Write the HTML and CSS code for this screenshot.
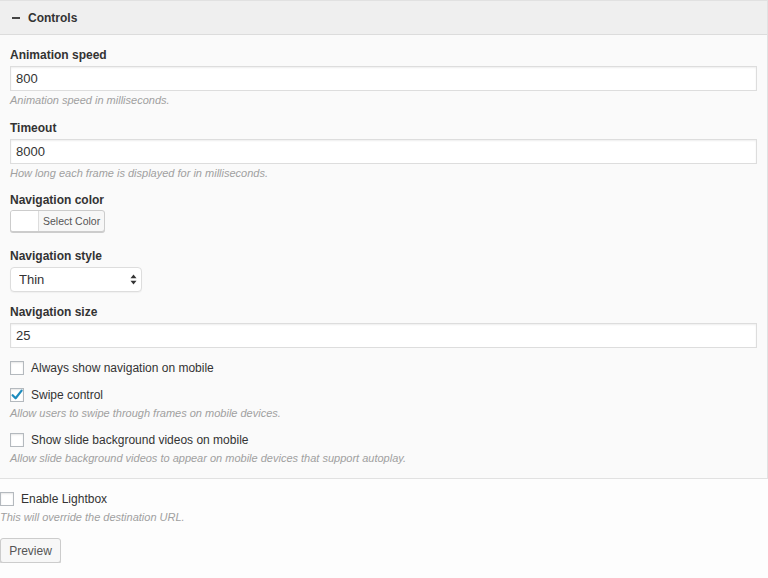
FILE: index.html
```html
<!DOCTYPE html>
<html lang="en">
<head>
<meta charset="UTF-8">
<meta name="viewport" content="width=device-width, initial-scale=1.0">
<title>Slide Controls</title>
<link rel="stylesheet" href="styles.css">
</head>
<body>

<div class="panel">
    <div class="panel-header"><span class="toggle"></span>Controls</div>
    <div class="panel-body">

        <div class="field">
            <label class="field-label" for="animSpeed">Animation speed</label>
            <input type="text" class="text-input" id="animSpeed" value="800">
            <p class="help">Animation speed in milliseconds.</p>
        </div>

        <div class="field">
            <label class="field-label" for="timeout">Timeout</label>
            <input type="text" class="text-input" id="timeout" value="8000">
            <p class="help">How long each frame is displayed for in milliseconds.</p>
        </div>

        <div class="field field-color">
            <label class="field-label">Navigation color</label>
            <button type="button" class="color-button"><span class="swatch"></span><span class="color-text">Select Color</span></button>
        </div>

        <div class="field field-select">
            <label class="field-label" for="navStyle">Navigation style</label>
            <div class="select-wrap">
                <select id="navStyle" class="select">
                    <option>Thin</option>
                    <option>Thick</option>
                </select>
                <svg class="select-arrows" width="7" height="11" viewBox="0 0 7 11">
                    <path d="M3.5 0.5 L6.5 4.2 L0.5 4.2 Z" fill="#333"/>
                    <path d="M3.5 10.5 L6.5 6.8 L0.5 6.8 Z" fill="#333"/>
                </svg>
            </div>
        </div>

        <div class="field">
            <label class="field-label" for="navSize">Navigation size</label>
            <input type="text" class="text-input" id="navSize" value="25">
        </div>

        <div class="check-row first">
            <span class="checkbox"></span>
            <span class="check-label">Always show navigation on mobile</span>
        </div>

        <div class="check-row">
            <span class="checkbox">
                <svg width="14" height="14" viewBox="0 0 14 14">
                    <path d="M2.6 7.2 L5.6 10.3 L11.6 2.6" fill="none" stroke="#1e8cbe" stroke-width="2.2" stroke-linecap="round" stroke-linejoin="round"/>
                </svg>
            </span>
            <span class="check-label">Swipe control</span>
        </div>
        <p class="help check-help">Allow users to swipe through frames on mobile devices.</p>

        <div class="check-row">
            <span class="checkbox"></span>
            <span class="check-label">Show slide background videos on mobile</span>
        </div>
        <p class="help check-help">Allow slide background videos to appear on mobile devices that support autoplay.</p>

    </div>
</div>

<div class="after-panel">
    <div class="check-row">
        <span class="checkbox"></span>
        <span class="check-label">Enable Lightbox</span>
    </div>
    <p class="help check-help">This will override the destination URL.</p>

    <button type="button" class="button">Preview</button>
</div>

</body>
</html>
```

FILE: styles.css
```css
body {
    font-family: "Liberation Sans", Arial, sans-serif;
    margin: 0;
    background-color: #fdfdfd;
    color: #333;
}
.panel {
    border: 1px solid #e1e1e1;
    border-left: none;
    background-color: #fafafa;
}
.panel-header {
    height: 34px;
    background-color: #efefef;
    border-bottom: 1px solid #dcdcdc;
    font-size: 12px;
    font-weight: bold;
    color: #333;
    padding: 1px 0 0 12px;
    box-sizing: border-box;
    display: flex;
    align-items: center;
}
.toggle {
    width: 8px;
    height: 2px;
    background-color: #444;
    margin-right: 8px;
}
.panel-body {
    padding: 12px 10px 13px 10px;
}
.field {
    margin-bottom: 13px;
}
.field-label {
    display: block;
    font-size: 12px;
    font-weight: bold;
    line-height: 16px;
    color: #333;
    margin-bottom: 3px;
}
.text-input {
    display: block;
    width: 100%;
    height: 25px;
    box-sizing: border-box;
    border: 1px solid #ddd;
    box-shadow: inset 0 1px 2px rgba(0, 0, 0, 0.07);
    background-color: #fff;
    padding: 0 5px;
    font-family: inherit;
    font-size: 13px;
    color: #333;
    outline: none;
}
.help {
    margin: 2px 0 0 0;
    font-size: 11px;
    line-height: 14px;
    font-style: italic;
    color: #a0a0a0;
}
.check-help {
    margin-top: 4px;
}
.field-color {
    margin-top: -1px;
}
.field-color .field-label {
    margin-bottom: 2px;
}
.color-button {
    display: flex;
    height: 22px;
    padding: 0;
    border: 1px solid #ccc;
    border-radius: 3px;
    background-color: #f7f7f7;
    box-shadow: 0 1px 0 #ccc;
    overflow: hidden;
    font-family: inherit;
    cursor: pointer;
}
.swatch {
    width: 27px;
    height: 100%;
    background-color: #fff;
    border-right: 1px solid #ddd;
}
.color-text {
    padding: 0 4px 0 4px;
    font-size: 10.5px;
    line-height: 20px;
    color: #555;
}
.field-select {
    margin-top: 16px;
    margin-bottom: 12px;
}
.select-wrap {
    position: relative;
    width: 132px;
}
.select {
    display: block;
    width: 100%;
    height: 25px;
    appearance: none;
    -webkit-appearance: none;
    border: 1px solid #ddd;
    border-radius: 4px;
    background-color: #fff;
    box-shadow: 0 1px 1px rgba(0, 0, 0, 0.04);
    padding: 0 8px;
    font-family: inherit;
    font-size: 13px;
    color: #333;
    outline: none;
}
.select-arrows {
    position: absolute;
    right: 5px;
    top: 7px;
    pointer-events: none;
}
.check-row {
    display: flex;
    align-items: center;
    height: 14px;
    margin-top: 13px;
}
.check-row.first {
    margin-top: 12px;
}
.checkbox {
    width: 12px;
    height: 12px;
    border: 1px solid #b4b9be;
    background-color: #fff;
    box-shadow: inset 0 1px 2px rgba(0, 0, 0, 0.1);
    margin-right: 7px;
    position: relative;
    flex-shrink: 0;
}
.checkbox svg {
    position: absolute;
    left: -1px;
    top: -1px;
}
.check-label {
    font-size: 12px;
    color: #333;
}
.after-panel {
    padding-top: 13px;
}
.after-panel .check-row {
    margin-top: 0;
}
.button {
    display: block;
    margin-top: 14px;
    height: 25px;
    width: 61px;
    padding: 0;
    border: 1px solid #ccc;
    border-radius: 3px;
    background-color: #f7f7f7;
    box-shadow: 0 1px 0 #ccc;
    font-family: inherit;
    font-size: 12px;
    color: #555;
    cursor: pointer;
}
```
